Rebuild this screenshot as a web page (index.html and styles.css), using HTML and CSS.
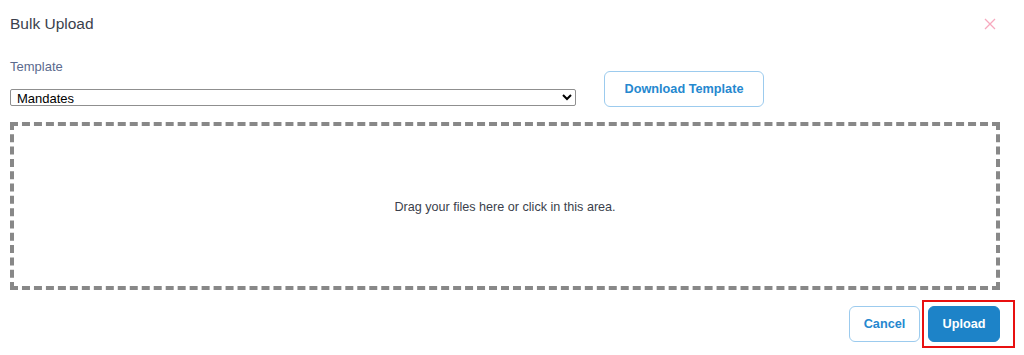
FILE: index.html
```html
<!DOCTYPE html>
<html>
<head>
<meta charset="utf-8">
<link rel="stylesheet" href="styles.css">
</head>
<body>
<div class="modal">
  <div class="header">
    <h1 class="title">Bulk Upload</h1>
    <button class="close" aria-label="Close">
      <svg width="12" height="12" viewBox="0 0 12 12"><path d="M1 1L11 11M11 1L1 11" stroke="#f7a9be" stroke-width="1.3" fill="none"/></svg>
    </button>
  </div>
  <div class="row">
    <div class="field">
      <label class="label">Template</label>
      <select class="select"><option>Mandates</option></select>
    </div>
    <button class="btn btn-outline btn-download">Download Template</button>
  </div>
  <div class="dropzone">Drag your files here or click in this area.</div>
  <div class="footer">
    <button class="btn btn-outline btn-cancel">Cancel</button>
    <button class="btn btn-primary btn-upload">Upload<span class="highlight"></span></button>
  </div>
</div>
</body>
</html>
```
FILE: styles.css
```css
html, body {
  margin: 0;
  padding: 0;
  background: #fff;
  font-family: "Liberation Sans", Arial, sans-serif;
}
.modal {
  width: 1024px;
  height: 355px;
  box-sizing: border-box;
  padding: 0 24px 0 10px;
}
.header {
  height: 48px;
  display: flex;
  align-items: center;
  justify-content: space-between;
}
.title {
  margin: 0;
  font-size: 15.5px;
  font-weight: normal;
  color: #3b3f4c;
}
.close {
  border: none;
  background: none;
  padding: 0;
  width: 12px;
  height: 12px;
  margin-right: 4px;
  display: flex;
}
.row {
  display: flex;
  align-items: flex-start;
  gap: 28px;
}
.field {
  width: 566px;
  display: flex;
  flex-direction: column;
  padding-top: 11px;
}
.label {
  font-size: 13px;
  color: #5b6a8e;
  line-height: 15px;
  margin-bottom: 15px;
}
.select {
  height: 17px;
  font-family: "Liberation Sans", Arial, sans-serif;
  font-size: 13px;
  color: #000;
  border: 1px solid #8f8f8f;
  border-radius: 2px;
  padding: 0 0 0 2px;
  background: #fff;
}
.btn {
  font-family: "Liberation Sans", Arial, sans-serif;
  font-weight: bold;
  font-size: 12.7px;
  border-radius: 6px;
  cursor: pointer;
  box-sizing: border-box;
}
.btn-outline {
  background: #fff;
  color: #2588cf;
  border: 1px solid #9ccbee;
}
.btn-download {
  margin-top: 23px;
  width: 160px;
  height: 36px;
}
.dropzone {
  margin-top: 15px;
  height: 168px;
  box-sizing: border-box;
  border: 4px dashed #888;
  display: flex;
  align-items: center;
  justify-content: center;
  padding-top: 2px;
  font-size: 12.6px;
  color: #3b3f4c;
}
.footer {
  display: flex;
  justify-content: flex-end;
  gap: 8px;
  margin-top: 16px;
}
.btn-cancel {
  width: 71px;
  height: 36px;
}
.btn-primary {
  background: #1d83c8;
  color: #fff;
  border: 1px solid #1d83c8;
}
.btn-upload {
  position: relative;
  width: 72px;
  height: 36px;
}
.highlight {
  position: absolute;
  left: -7px;
  top: -7px;
  right: -16px;
  bottom: -7px;
  border: 2px solid #e81010;
  pointer-events: none;
}
```
